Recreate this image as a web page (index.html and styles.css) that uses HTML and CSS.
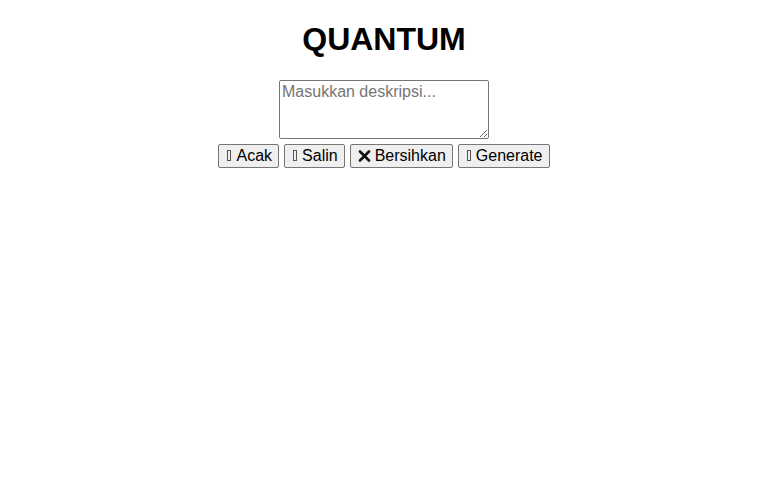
FILE: index.html
```html
<!DOCTYPE html>
<html lang="id">
<head>
<meta charset="utf-8">
<title>QUANTUM</title>
<link rel="stylesheet" href="styles.css">
</head>
<body>
<main class="app">
  <h1 class="title">QUANTUM</h1>
  <div class="input-row">
    <textarea class="prompt" placeholder="Masukkan deskripsi..."></textarea>
  </div>
  <div class="actions">
    <button class="btn"><span class="tofu"></span>Acak</button>
    <button class="btn"><span class="tofu"></span>Salin</button>
    <button class="btn"><svg class="x-icon" viewBox="0 0 14 12" width="14" height="12" aria-hidden="true"><path d="M3 1.5 L12 10.5 M12 1.5 L3 10.5" stroke="#111" stroke-width="2.6" stroke-linecap="round" fill="none"/></svg>Bersihkan</button>
    <button class="btn"><span class="tofu"></span>Generate</button>
  </div>
</main>
</body>
</html>
```
FILE: styles.css
```css
html, body {
  margin: 0;
  padding: 0;
  background: #ffffff;
}
body {
  font-family: "Liberation Sans", Arial, sans-serif;
  color: #000;
}
.app {
  text-align: center;
  padding-top: 21px;
}
.title {
  font-size: 32px;
  font-weight: bold;
  margin: 0 0 22px 0;
  line-height: 37px;
}
.input-row {
  height: 64px;
}
.prompt {
  box-sizing: border-box;
  width: 210px;
  height: 59px;
  font-family: "Liberation Sans", Arial, sans-serif;
  font-size: 16px;
  padding: 2px;
  margin: 0;
  border: 1px solid #767676;
  border-radius: 2px;
  vertical-align: top;
}
.prompt::placeholder {
  color: #757575;
}
.actions {
  display: flex;
  justify-content: center;
  gap: 5px;
}
.btn {
  font-family: "Liberation Sans", Arial, sans-serif;
  font-size: 16px;
  height: 24px;
  padding: 1px 6px;
  margin: 0;
  background: #efefef;
  border: 1px solid #767676;
  border-radius: 2px;
  color: #000;
  white-space: nowrap;
}
.tofu {
  display: inline-block;
  box-sizing: border-box;
  width: 4px;
  height: 11px;
  margin: 0 5px 0 2px;
  border: 1px solid #555;
  vertical-align: 0;
}
.x-icon {
  margin-right: 4px;
  vertical-align: -1px;
}
```
